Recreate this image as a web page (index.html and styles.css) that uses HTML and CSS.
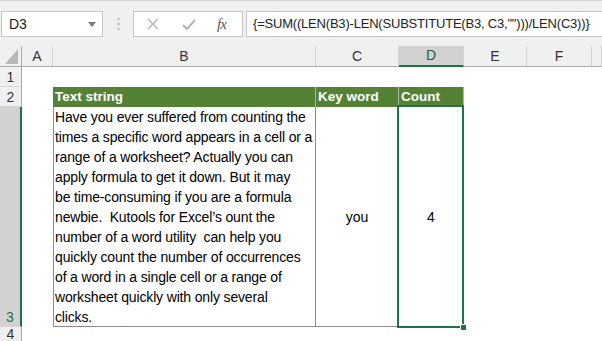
FILE: index.html
```html
<!DOCTYPE html>
<html lang="en">
<head>
    <meta charset="UTF-8">
    <meta name="viewport" content="width=device-width, initial-scale=1.0">
    <title>Count word occurrences</title>
    <link rel="stylesheet" href="styles.css">
</head>
<body>
    <div class="formula-bar">
        <div class="name-box">
            <span>D3</span>
            <svg class="caret" width="8" height="5" viewBox="0 0 8 5"><path d="M0 0h8L4 5z" fill="#7a7a7a"/></svg>
        </div>
        <div class="grip">
            <svg width="3" height="12" viewBox="0 0 3 12"><rect x="0.5" y="0" width="2" height="2" fill="#b8b8b8"/><rect x="0.5" y="5" width="2" height="2" fill="#b8b8b8"/><rect x="0.5" y="10" width="2" height="2" fill="#b8b8b8"/></svg>
        </div>
        <div class="fx-buttons">
            <svg class="btn-cancel" width="12" height="12" viewBox="0 0 12 12"><path d="M1 1L11 11M11 1L1 11" stroke="#b4b4b4" stroke-width="1.4" fill="none"/></svg>
            <svg class="btn-enter" width="14" height="11" viewBox="0 0 14 11"><path d="M1 6L5 10L13 1" stroke="#b4b4b4" stroke-width="2" fill="none"/></svg>
            <span class="fx">fx</span>
        </div>
        <div class="formula-input">{=SUM((LEN(B3)-LEN(SUBSTITUTE(B3, C3,"")))/LEN(C3))}</div>
    </div>

    <div class="sheet">
        <!-- column headers -->
        <div class="corner">
            <svg width="13" height="15" viewBox="0 0 13 15"><path d="M13 0V15H0z" fill="#b9b9b9"/></svg>
        </div>
        <div class="col-head">A</div>
        <div class="col-head">B</div>
        <div class="col-head">C</div>
        <div class="col-head active">D</div>
        <div class="col-head">E</div>
        <div class="col-head">F</div>
        <div class="col-head"></div>

        <!-- row 1 -->
        <div class="row-head">1</div>
        <div class="cell span-rest"></div>

        <!-- row 2 -->
        <div class="row-head">2</div>
        <div class="cell"></div>
        <div class="cell th">Text string</div>
        <div class="cell th">Key word</div>
        <div class="cell th">Count</div>
        <div class="cell span-3"></div>

        <!-- row 3 -->
        <div class="row-head active">3</div>
        <div class="cell"></div>
        <div class="cell td text">
            Have you ever suffered from counting the<br>
            times a specific word appears in a cell or a<br>
            range of a worksheet? Actually you can<br>
            apply formula to get it down. But it may<br>
            be time-consuming if you are a formula<br>
            newbie.&nbsp; Kutools for Excel’s ount the<br>
            number of a word utility&nbsp; can help you<br>
            quickly count the number of occurrences<br>
            of a word in a single cell or a range of<br>
            worksheet quickly with only several<br>
            clicks.
        </div>
        <div class="cell td center">you</div>
        <div class="cell td center selected">4<span class="fill-handle"></span></div>
        <div class="cell span-3"></div>

        <!-- row 4 -->
        <div class="row-head last">4</div>
        <div class="cell span-rest"></div>
    </div>
</body>
</html>
```

FILE: styles.css
```css
body {
    margin: 0;
    width: 602px;
    height: 341px;
    overflow: hidden;
    font-family: "Liberation Sans", Arial, sans-serif;
    background: #fff;
    color: #000;
}

/* formula bar */
.formula-bar {
    height: 46px;
    box-sizing: border-box;
    background: #f0f0f0;
    border-top: 1px solid #d6d6d6;
    padding-top: 10px;
    display: flex;
    align-items: flex-start;
}

.name-box {
    margin-left: 1px;
    width: 102px;
    height: 26px;
    box-sizing: border-box;
    background: #fff;
    border: 1px solid #c6c6c6;
    display: flex;
    align-items: center;
    padding: 0 6px 0 7px;
    font-size: 14px;
    color: #222;
}

.caret {
    margin-left: auto;
}

.grip {
    width: 30px;
    height: 26px;
    display: flex;
    align-items: center;
    justify-content: center;
}

.fx-buttons {
    width: 110px;
    height: 26px;
    box-sizing: border-box;
    background: #fff;
    border: 1px solid #c6c6c6;
    display: flex;
    align-items: center;
    padding-left: 13px;
}

.btn-enter {
    margin-left: 23px;
}

.fx {
    margin-left: 21px;
    font-family: "Liberation Serif", "Times New Roman", serif;
    font-style: italic;
    font-size: 15px;
    color: #5a5a5a;
    letter-spacing: -1px;
}

.formula-input {
    flex: 1;
    margin-left: 3px;
    margin-right: -4px;
    height: 26px;
    box-sizing: border-box;
    background: #fff;
    border: 1px solid #c6c6c6;
    padding-left: 6px;
    font-size: 13px;
    letter-spacing: -0.2px;
    line-height: 24px;
    color: #222;
    white-space: nowrap;
}

/* sheet grid */
.sheet {
    display: grid;
    grid-template-columns: 22px 31px 263px 83px 65px 63px 65px 1fr;
    grid-template-rows: 21px 20px 20px 220px 1fr;
    height: 295px;
}

.corner {
    background: #f0f0f0;
    border-right: 1px solid #ababab;
    border-bottom: 1px solid #ababab;
    display: flex;
    align-items: flex-end;
    justify-content: flex-end;
    padding: 0 3px 2px 0;
}

.col-head {
    background: #f0f0f0;
    border-right: 1px solid #d4d4d4;
    border-bottom: 1px solid #ababab;
    font-size: 14px;
    color: #333;
    text-align: center;
    line-height: 20px;
}

.col-head.active {
    background: #d2d2d2;
    border-bottom: 2px solid #217346;
    color: #1e5e38;
    line-height: 19px;
}

.row-head {
    background: #f0f0f0;
    border-right: 1px solid #ababab;
    border-bottom: 1px solid #d4d4d4;
    font-size: 14px;
    color: #333;
    display: flex;
    align-items: flex-end;
    justify-content: center;
    padding-bottom: 1px;
}

.row-head.active {
    background: #d2d2d2;
    border-right: 2px solid #217346;
    color: #217346;
}

.row-head.last {
    align-items: flex-start;
    padding: 0;
    line-height: 14px;
}

.span-rest {
    grid-column: span 7;
}

.span-3 {
    grid-column: span 3;
}

.th {
    background: #548235;
    color: #fff;
    font-weight: bold;
    font-size: 13.5px;
    line-height: 20px;
    padding-left: 2px;
    border-right: 1px solid #a9b99c;
    white-space: nowrap;
}

.td {
    border-right: 1px solid #8c8c8c;
    border-bottom: 1px solid #8c8c8c;
    font-size: 14px;
}

.text {
    border-left: 1px solid #8c8c8c;
    padding-left: 1px;
    line-height: 20px;
    letter-spacing: -0.15px;
    white-space: nowrap;
}

.center {
    display: flex;
    align-items: center;
    justify-content: center;
}

.selected {
    position: relative;
}

.selected::before {
    content: "";
    position: absolute;
    top: -2px;
    left: -2px;
    right: -1px;
    bottom: -2px;
    border: 2px solid #217346;
}

.fill-handle {
    position: absolute;
    right: -4px;
    bottom: -5px;
    width: 5px;
    height: 5px;
    background: #217346;
    border: 1px solid #fff;
}
```
